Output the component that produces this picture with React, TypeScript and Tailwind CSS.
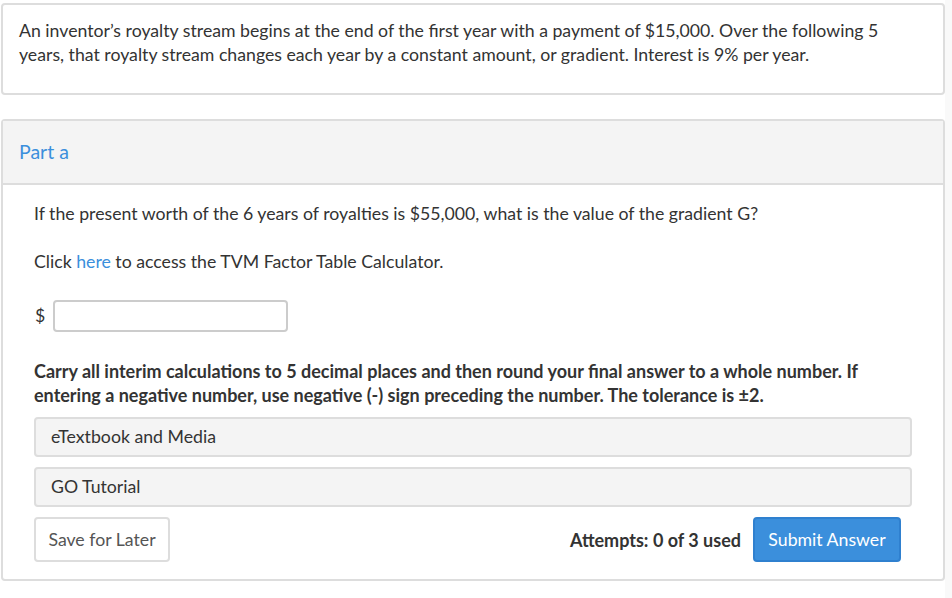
import React from 'react';

const App: React.FC = () => {
  return (
    <div className="flex min-h-[598px] bg-white font-['Lato',_'Liberation_Sans',_sans-serif] text-[17.7px] leading-6 text-[#333]">
      <div className="w-[945px] pl-px pt-[3px]">
        {/* Question stem */}
        <div className="rounded border-2 border-[#dddddd] bg-white pl-4 pr-4 pt-[14px] pb-[26px]">
          <p>
            An inventor’s royalty stream begins at the end of the first year with a payment of $15,000. Over the following 5
            years, that royalty stream changes each year by a constant amount, or gradient. Interest is 9% per year.
          </p>
        </div>

        {/* Part a */}
        <div className="mt-[24px] rounded border-2 border-[#dddddd] bg-white">
          <div className="flex h-[64px] items-center border-b-2 border-[#dddddd] bg-[#f4f4f4] pl-4">
            <h3 className="text-[19.5px] text-[#3b8fdc]">Part a</h3>
          </div>

          <div className="px-[31px] pt-[17px] pb-[17px]">
            <p>If the present worth of the 6 years of royalties is $55,000, what is the value of the gradient G?</p>
            <p className="mt-6">
              Click <span className="text-[#3b8fdc]">here</span> to access the TVM Factor Table Calculator.
            </p>

            <div className="mt-[26px] flex items-center gap-[8px]">
              <span className="pl-[1px]">$</span>
              <div className="h-[32px] w-[235px] rounded-sm border-2 border-[#cccccc] bg-white" />
            </div>

            <p className="mt-[27px] text-[18px] font-bold">
              Carry all interim calculations to 5 decimal places and then round your final answer to a whole number. If
              entering a negative number, use negative (-) sign preceding the number. The tolerance is ±2.
            </p>

            <div className="mt-[10px] flex flex-col gap-[10px]">
              <div className="flex h-[40px] items-center rounded border-2 border-[#dddddd] bg-[#f4f4f4] pl-[15px]">
                eTextbook and Media
              </div>
              <div className="flex h-[40px] items-center rounded border-2 border-[#dddddd] bg-[#f4f4f4] pl-[15px]">
                GO Tutorial
              </div>
            </div>

            <div className="mt-[10px] flex items-center">
              <button className="h-[45px] w-[136px] rounded border-2 border-[#dddddd] bg-white text-[#555]">
                Save for Later
              </button>
              <div className="flex-1" />
              <span className="mr-[12px] text-[18px] font-bold text-[#333]">Attempts: 0 of 3 used</span>
              <button className="mr-[11px] h-[45px] w-[148px] rounded border-2 border-[#2f80cf] bg-[#3b8fdc] text-white">
                Submit Answer
              </button>
            </div>
          </div>
        </div>
      </div>
      <div className="flex-1 bg-[#f9f9f9]" />
    </div>
  );
};

export default App;
